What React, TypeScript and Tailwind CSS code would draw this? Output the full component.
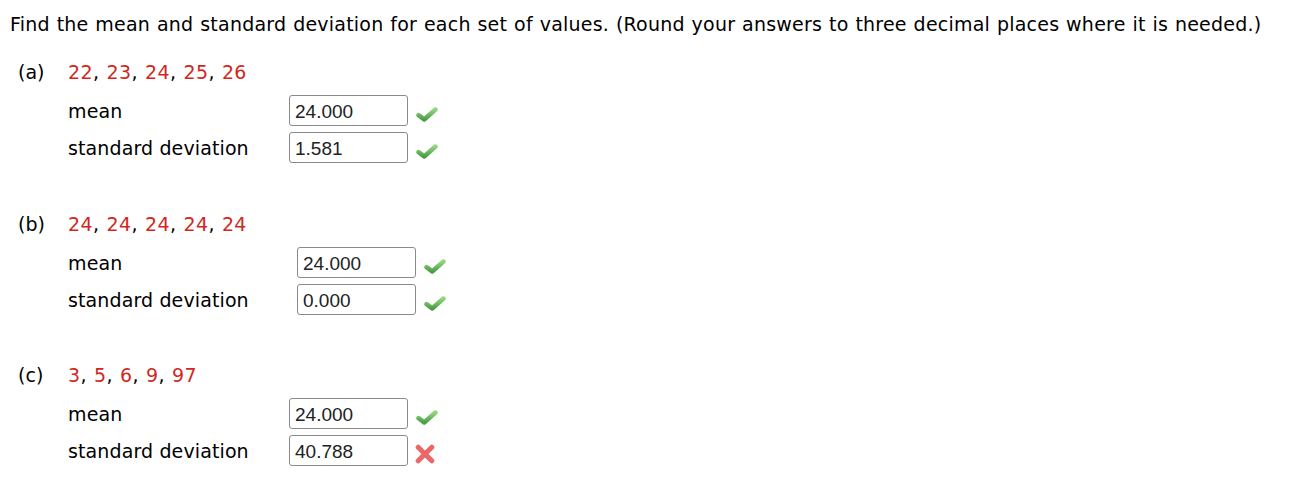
import React from "react";

const Check = () => (
  <svg width="22" height="15" viewBox="0 0 22 15" className="block">
    <defs>
      <linearGradient id="gck" x1="0" y1="0" x2="0" y2="1">
        <stop offset="0" stopColor="#93d47f" />
        <stop offset="1" stopColor="#4c9f45" />
      </linearGradient>
    </defs>
    <polyline
      points="2.6,8.2 8.2,12.4 19.4,2.6"
      fill="none"
      stroke="url(#gck)"
      strokeWidth="4.6"
      strokeLinecap="round"
      strokeLinejoin="round"
    />
  </svg>
);

const Cross = () => (
  <svg width="20" height="20" viewBox="0 0 20 20" className="block">
    <path
      d="M3.2 3.2 L16.8 16.8 M16.8 3.2 L3.2 16.8"
      stroke="#ec5f5f"
      strokeWidth="5"
      strokeLinecap="round"
      opacity="0.95"
    />
  </svg>
);

type Row = { label: string; value: string; ok: boolean };

const Part = ({
  tag,
  nums,
  rows,
  wide,
}: {
  tag: string;
  nums: string[];
  rows: Row[];
  wide?: boolean;
}) => (
  <div className="pl-[18px]">
    <div className="flex h-[24px] items-center leading-[24px]">
      <span className="w-[50px]">({tag})</span>
      <span className="tracking-[0.4px] [word-spacing:0.6px]">
        {nums.map((n, i) => (
          <React.Fragment key={i}>
            <span className="text-[#d0281e]">{n}</span>
            {i < nums.length - 1 ? ", " : ""}
          </React.Fragment>
        ))}
      </span>
    </div>
    <div className="mt-[11px] flex flex-col gap-[6px] pl-[50px]">
      {rows.map((r) => (
        <div key={r.label} className="flex h-[31px] items-start">
          <div className="flex items-baseline">
            <span
              className={
                wide
                  ? "w-[229px] leading-[24px] tracking-[0.12px]"
                  : "w-[221px] leading-[24px] tracking-[0.12px]"
              }
            >
              {r.label}
            </span>
            <div
              className="h-[31px] w-[119px] rounded-[3px] border border-[#8a8a8a] bg-white pl-[5px] pt-[2px] text-[19px] leading-[27px] text-[#222]"
              style={{ fontFamily: '"Liberation Sans", Arial, sans-serif' }}
            >
              {r.value}
            </div>
          </div>
          {r.ok ? (
            <div className="ml-[8px] mt-[12px]">
              <Check />
            </div>
          ) : (
            <div className="ml-[7px] mt-[9px]">
              <Cross />
            </div>
          )}
        </div>
      ))}
    </div>
  </div>
);

export default function App() {
  return (
    <div
      className="min-h-[502px] w-[1296px] bg-white text-[19px] text-black"
      style={{ fontFamily: '"DejaVu Sans", Verdana, sans-serif' }}
    >
      <div className="pl-[10px] pt-[12px] leading-[24px] tracking-[0.22px] [word-spacing:0.6px]">
        Find the mean and standard deviation for each set of values. (Round your answers to three decimal places where it is needed.)
      </div>
      <div className="mt-[24px] flex flex-col">
        <Part
          tag="a"
          nums={["22", "23", "24", "25", "26"]}
          rows={[
            { label: "mean", value: "24.000", ok: true },
            { label: "standard deviation", value: "1.581", ok: true },
          ]}
        />
        <div className="h-[49px]" />
        <Part
          tag="b"
          nums={["24", "24", "24", "24", "24"]}
          wide
          rows={[
            { label: "mean", value: "24.000", ok: true },
            { label: "standard deviation", value: "0.000", ok: true },
          ]}
        />
        <div className="h-[48px]" />
        <Part
          tag="c"
          nums={["3", "5", "6", "9", "97"]}
          rows={[
            { label: "mean", value: "24.000", ok: true },
            { label: "standard deviation", value: "40.788", ok: false },
          ]}
        />
      </div>
    </div>
  );
}
